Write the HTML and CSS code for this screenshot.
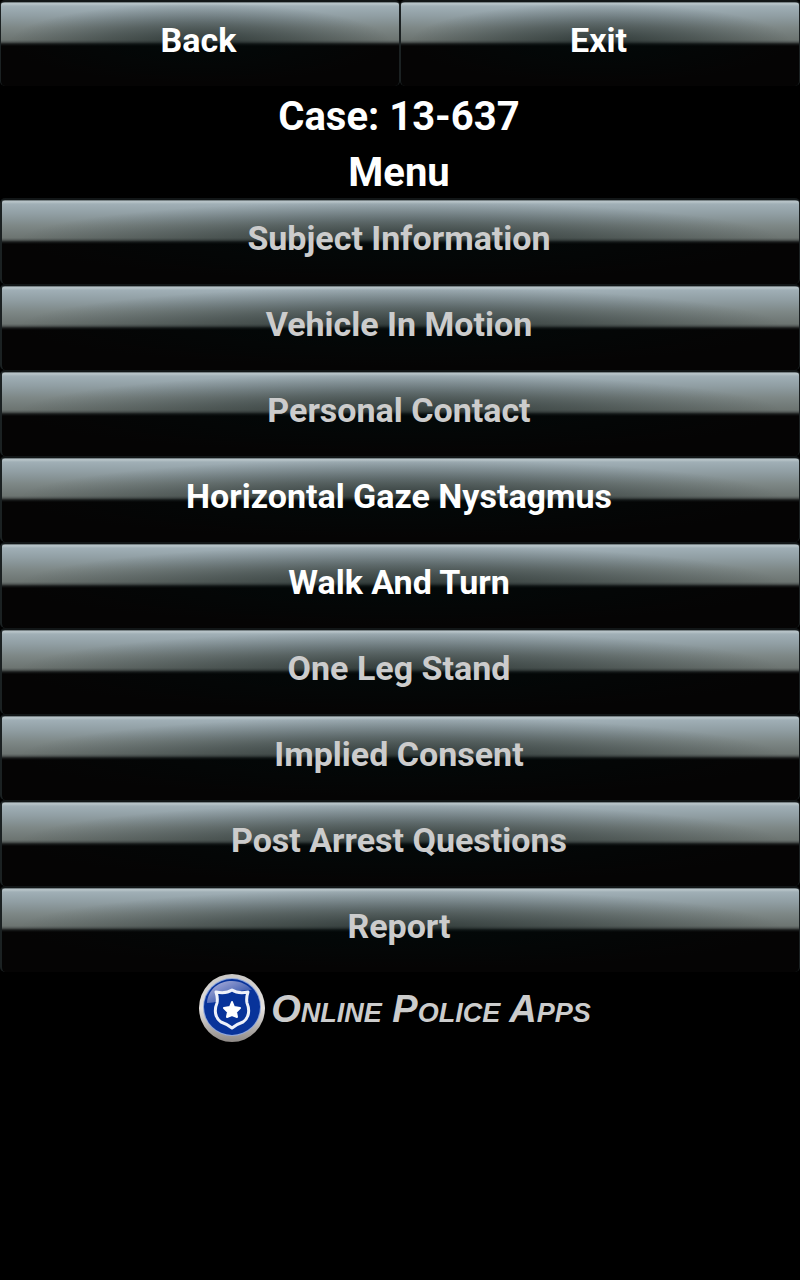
FILE: index.html
```html
<!DOCTYPE html>
<html lang="en">
    <head>
        <meta charset="UTF-8" />
        <meta name="viewport" content="width=device-width, initial-scale=1">
        <title>Case Menu</title>
        <link rel="stylesheet" href="styles.css">
    </head>
    <body>
    <div class="top-bar">
        <button type="button">Back</button>
        <button type="button">Exit</button>
    </div>
    <h1>Case: 13-637</h1>
    <h2>Menu</h2>
    <div class="menu">
        <button type="button" class="done">Subject Information</button>
        <button type="button" class="done">Vehicle In Motion</button>
        <button type="button" class="done">Personal Contact</button>
        <button type="button">Horizontal Gaze Nystagmus</button>
        <button type="button">Walk And Turn</button>
        <button type="button" class="done">One Leg Stand</button>
        <button type="button" class="done">Implied Consent</button>
        <button type="button" class="done">Post Arrest Questions</button>
        <button type="button" class="done">Report</button>
    </div>
    <div class="logo">
        <svg class="badge" viewBox="0 0 68 72" aria-hidden="true">
            <defs>
                <linearGradient id="ring" x1="0" y1="0" x2="0" y2="1">
                    <stop offset="0" stop-color="#c9c7c5" />
                    <stop offset="0.5" stop-color="#e6e3e0" />
                    <stop offset="1" stop-color="#8e8986" />
                </linearGradient>
                <linearGradient id="shine" x1="0" y1="0" x2="1" y2="1">
                    <stop offset="0" stop-color="#b9b9df" />
                    <stop offset="1" stop-color="#08339a" />
                </linearGradient>
            </defs>
            <ellipse cx="33" cy="36" rx="33" ry="34" fill="url(#ring)" />
            <circle cx="33" cy="35" r="29" fill="#8fa6dc" />
            <circle cx="33" cy="35" r="28" fill="#08339a" />
            <path d="M8 31 C9 17 20 9 33 9 C42 9 49 13 53 18 C44 18 38 19 31 23 C23 28 17 31 8 31 Z" fill="url(#shine)" />
            <path d="M33 18 Q39 22 49 20 Q47 26 48 31 C51 38 50 46 44 50 Q38 52 33 56 Q28 52 22 50 C16 46 15 38 18 31 Q19 26 17 20 Q27 22 33 18 Z" fill="#08339a" stroke="#eef1fa" stroke-width="3" stroke-linejoin="round" />
            <path d="M33 30 L35 35 L41 36 L37 40 L38 45 L33 43 L28 45 L29 40 L25 36 L31 35 Z" fill="#fff" stroke="#fff" stroke-width="2" stroke-linejoin="round" />
        </svg>
        <span class="brand">Online Police Apps</span>
    </div>
    </body>
</html>
```
FILE: styles.css
```css
* {
    box-sizing: border-box;
}
body {
    margin: 0;
    background-color: #000;
    color: #fff;
    font-family: Roboto, "Liberation Sans", sans-serif;
}
h1, h2 {
    margin: 0;
    padding-right: 2px;
    text-align: center;
    font-size: 40px;
    font-weight: bold;
    line-height: 56px;
}
h1 {
    padding-top: 3px;
}
h2 {
    margin-bottom: -3px;
}
.top-bar {
    display: grid;
    grid-template-columns: 1fr 1fr;
}
.menu {
    display: flex;
    flex-direction: column;
}

/* glossy bar: light upper half over a near black lower half */
button {
    min-height: 86px;
    padding: 0 11px 8px 8px;
    border: 1px solid #1b2122;
    border-top: 2px solid #121617;
    border-bottom: 0;
    border-radius: 5px;
    background-color: #050404;
    background-image:
        radial-gradient(ellipse 48% 40px at 50% 41px, rgba(0, 12, 12, 0.55), rgba(0, 12, 12, 0.3) 50%, rgba(0, 0, 0, 0)),
        linear-gradient(#3a4344 0, #b6c2c7 1px, #b6c2c7 2px, #a0afb6 4px, #909ea3 14px, #7d8786 26px, #6c7471 38px, #525856 40px, #1a1c1c 42px, #050404 44px);
    color: #fff;
    font-family: inherit;
    font-size: 34px;
    font-weight: bold;
    cursor: pointer;
}
.menu button {
    border-left-width: 2px;
}
button.done {
    color: #ccc;
}
button:active {
    background-color: #2c3a40;
}
.logo {
    display: flex;
    justify-content: center;
    align-items: center;
    gap: 4px;
    padding-right: 10px;
}
.badge {
    width: 68px;
    height: 72px;
}
.brand {
    padding-top: 3px;
    color: #ccc;
    font-family: "Liberation Sans", Arial, sans-serif;
    font-size: 38px;
    font-style: italic;
    font-weight: bold;
    font-variant: small-caps;
}
```
